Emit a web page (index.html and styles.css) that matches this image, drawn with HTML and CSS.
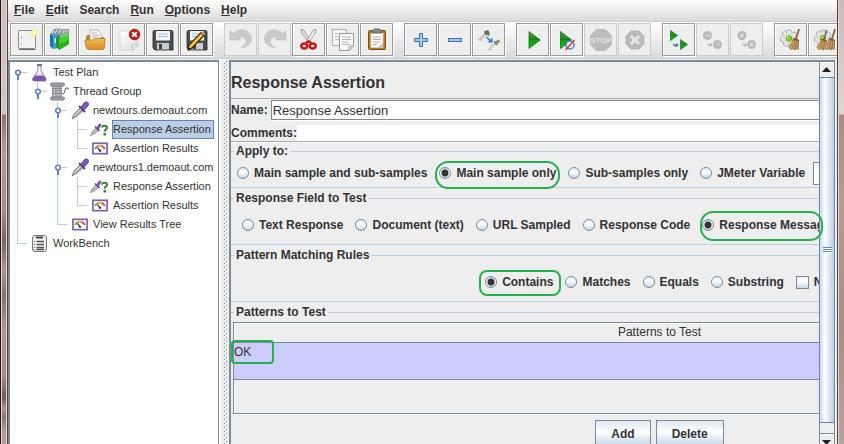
FILE: index.html
```html
<!DOCTYPE html>
<html lang="en">
<head>
<meta charset="utf-8">
<title>Response Assertion</title>
<link rel="stylesheet" href="styles.css">
</head>
<body>
<svg class="defs" aria-hidden="true">
  <defs>
    <linearGradient id="green" x1="0" y1="0" x2="0" y2="1"><stop offset="0" stop-color="#4fae4a"/><stop offset=".48" stop-color="#1c7a1c"/><stop offset=".52" stop-color="#04a804"/><stop offset="1" stop-color="#0cc40c"/></linearGradient>
    <linearGradient id="page" x1="0" y1="0" x2="1" y2="1"><stop offset="0" stop-color="#fff"/><stop offset="1" stop-color="#dcdcdc"/></linearGradient>
    <linearGradient id="folder" x1="0" y1="0" x2="0" y2="1"><stop offset="0" stop-color="#f0bf55"/><stop offset="1" stop-color="#d0922a"/></linearGradient>
    <linearGradient id="broom" x1="0" y1="0" x2="1" y2="0"><stop offset="0" stop-color="#c99a62"/><stop offset="1" stop-color="#8f6133"/></linearGradient>
    <symbol id="floppy" viewBox="0 0 31 31">
      <path d="M7 6.500H25L26 7.500V26H8L6 24V7.500Z" fill="#4a4d52" stroke="#222" stroke-width=".8"/>
      <rect x="9" y="7" width="14" height="9.500" fill="#eef3fa"/>
      <path d="M11 10H21M11 12.500H21" stroke="#a9c2e2"/>
      <rect x="10" y="19" width="12" height="6.500" fill="#c9cbce"/>
      <rect x="12" y="20" width="3" height="5" fill="#3b3d40"/>
    </symbol>
    <symbol id="dropper" viewBox="0 0 18 19">
      <path d="M1 18L3 13L10 6L13 9L6 15Z" fill="#a9a4ae" stroke="#77717e" stroke-width=".8"/>
      <path d="M3 15L10 8" stroke="#eee"/>
      <path d="M8 5L14 11" stroke="#5c3f91" stroke-width="2"/>
      <path d="M10 6L13 2Q15 0 17 1.500Q18.500 3.500 17 5L13 9Z" fill="#7b57b8" stroke="#593b8c" stroke-width=".7"/>
    </symbol>
    <symbol id="assert" viewBox="0 0 18 14">
      <path d="M.5 13.500L2 10L6.500 5.500L9 8L4.500 12Z" fill="#bcb8c0" stroke="#8a8491" stroke-width=".7"/>
      <path d="M5 4.500L9.500 9" stroke="#5c3f91" stroke-width="1.500"/>
      <path d="M6.500 5L9 2Q11 .5 11.500 3L9 7.500Z" fill="#7b57b8"/>
      <path d="M12 5.500Q12.500 3.800 14.500 3.800Q17 3.800 17 5.800Q17 7 15.800 7.700Q14.700 8.300 14.700 9.700" fill="none" stroke="#3b8132" stroke-width="2"/>
      <rect x="13.500" y="11" width="2.500" height="2.500" fill="#3b8132"/>
    </symbol>
    <symbol id="gauge" viewBox="0 0 17 13">
      <rect x="1" y="1" width="15" height="11" fill="#fff" stroke="#7d60ab" stroke-width="1.800"/>
      <path d="M3.500 7Q4 4.500 6.500 4" fill="none" stroke="#52a84d" stroke-width="2"/>
      <path d="M6 4Q8.500 2.800 11 4" fill="none" stroke="#efa04c" stroke-width="2"/>
      <path d="M10.500 4Q13 5 13.500 7" fill="none" stroke="#e0483e" stroke-width="2"/>
      <path d="M6 5.500L8.500 9" stroke="#222" stroke-width="1.200"/><circle cx="8.500" cy="9" r="1.200" fill="#222"/>
    </symbol>
    <symbol id="knob" viewBox="0 0 14 19">
      <path d="M7 9.500H13" stroke="#b8cfe5"/>
      <path d="M4 12V17" stroke="#6382bf" stroke-width="2"/>
      <circle cx="4" cy="9.500" r="2.300" fill="#fff" stroke="#6382bf" stroke-width="1.600"/>
    </symbol>
    <symbol id="twig" viewBox="0 0 14 19"><path d="M4 9.500H13" stroke="#b8cfe5"/></symbol>
    <symbol id="sweep" viewBox="0 0 12 22">
      <path d="M11 0L8 10" stroke="#8a6a45" stroke-width="1.800"/>
      <path d="M5 9L11 11L10.500 21L8.500 20L7 21.500L5 20L3 21L0 18Q4 14 5 9Z" fill="url(#broom)"/>
      <path d="M6 12L3 19M8 12L6 20M9.500 12L9 20" stroke="#e3bd87" stroke-width=".7"/>
      <path d="M5 9.500L11 11.500" stroke="#6f4a26"/>
    </symbol>
    <symbol id="gear" viewBox="0 0 18 18">
      <path d="M7 1H11L11.500 3.200L13 3.900L15 2.700L17 5.500L15.600 7.200V8L17.500 9V12L15.300 12.500L14.500 14L15 16L12.300 17.500L10.700 16H8L6.500 17.500L3.500 16L3.700 14L2.800 12.500L.5 12V8.500L2.500 7.500L2.900 6.200L2 4.200L4.300 2.200L6.200 3.300Z" fill="#e6e6e6" stroke="#a9a9a9" stroke-width=".9"/>
      <circle cx="9" cy="9.500" r="4.600" fill="#f5f5f5" stroke="#c4c4c4" stroke-width=".7"/>
      <circle cx="9" cy="9.500" r="2.900" fill="#7ecb1d" stroke="#5e9a1a" stroke-width=".7"/><circle cx="8.200" cy="8.500" r="1" fill="#d6f59d"/>
    </symbol>
  </defs>
</svg>
<div class="desktop">
  <div class="edge edge-left"></div>
  <main class="window">
    <nav class="menubar">
      <a href="#"><u>F</u>ile</a>
      <a href="#"><u>E</u>dit</a>
      <a href="#">Search</a>
      <a href="#"><u>R</u>un</a>
      <a href="#"><u>O</u>ptions</a>
      <a href="#"><u>H</u>elp</a>
    </nav>

    <div class="toolbar">
      <div class="group">
        <button aria-label="New"><svg viewBox="0 0 31 31"><rect x="7.500" y="6.500" width="17" height="18" rx="1" fill="#f1f1f1" stroke="#8c8c8c"/><path d="M8 25.500H24.500" stroke="#666"/><path d="M10.500 13v1.500M10.500 19v1.500" stroke="#999"/><circle cx="23" cy="9" r="3.500" fill="#f6ee7e"/><path d="M23 5L24 8L27 9L24 10L23 13L22 10L19 9L22 8Z" fill="#fffbd0"/></svg></button>
        <button aria-label="Templates"><svg viewBox="0 0 31 31"><path d="M5 10L9 5L13 4.500L18 5L24 5V12L9 14Z" fill="#8e9ca4"/><path d="M7 9L10 6M10 9L12.500 5.500M14 9L16 5.500M18 9L19.500 6M21 8L22.500 6" stroke="#e9eff2"/><path d="M5 10L8 11V25L5 22Z" fill="#1d6fae"/><path d="M8 11L14 10.500V24L8 25Z" fill="#3a9ad9"/><rect x="9.500" y="14" width="2" height="5" fill="#d9eefa"/><path d="M11 14L14 11L15 13V26L11 23Z" fill="#1f9a1f"/><path d="M14 14L24 11V20L14 26Z" fill="#45cf2c"/><path d="M14 20Q20 19 24 15V20L14 26Z" fill="#2bb11d"/><path d="M14 14L20 9L24 11Z" fill="#7fd76b"/></svg></button>
        <button aria-label="Open"><svg viewBox="0 0 31 31"><path d="M7 13Q7 11 9 11H12L14 13H25V24H8Z" fill="#b77f23"/><path d="M11 6H19L22 9V18H11Z" fill="#fafafa" stroke="#a9a9a9" stroke-width=".8"/><path d="M13 9H18M13 11H20M13 13H20" stroke="#aaa" stroke-width=".8"/><path d="M6 16H14L16 14.500H26Q26 24 24.500 25.500H9Q7 25 6 16Z" fill="url(#folder)" stroke="#b47b20" stroke-width=".8"/></svg></button>
        <button aria-label="Close"><svg viewBox="0 0 31 31"><path d="M7 7H25V21L20 26H7Z" fill="url(#page)" stroke="#cfcfcf" stroke-width=".8"/><path d="M25 20.500L19 21.500L20 26Z" fill="#fff" stroke="#a5a5a5" stroke-width=".7"/><circle cx="21.500" cy="10.500" r="5.300" fill="#c21616" stroke="#8d1010" stroke-width=".8"/><path d="M19.200 8.200L23.800 12.800M23.800 8.200L19.200 12.800" stroke="#fff" stroke-width="2"/></svg></button>
        <button aria-label="Save"><svg viewBox="0 0 31 31"><use href="#floppy"/></svg></button>
        <button aria-label="Save as"><svg viewBox="0 0 31 31"><use href="#floppy"/><path d="M7 26L8 21L20 8.500L23 11.500L11 24Z" fill="#f0b52a" stroke="#3c2c08" stroke-width="1.200"/><path d="M9.500 22.500L21 10.500" stroke="#ffe08a" stroke-width=".8"/><path d="M20 8.500L21.500 7L24.500 10L23 11.500Z" fill="#c98a7e"/><path d="M7 26L7.600 23.500L9.500 25Z" fill="#111"/></svg></button>
      </div>
      <div class="group">
        <button aria-label="Undo" disabled><svg viewBox="0 0 31 31"><path d="M5 7L8.500 9.500Q14 4 21 6.500Q27 9.500 26.500 16Q25 23 16.500 23.500Q22 20 20.500 15.500Q18 11.500 13.500 13.500L16 16H5Z" fill="#cacaca" stroke="#bcbcbc" stroke-width=".6"/></svg></button>
        <button aria-label="Redo" disabled><svg viewBox="0 0 31 31"><path d="M27 7L23.500 9.500Q18 4 11 6.500Q5 9.500 5.500 16Q7 23 15.500 23.500Q10 20 11.500 15.500Q14 11.500 18.500 13.500L16 16H27Z" fill="#cacaca" stroke="#bcbcbc" stroke-width=".6"/></svg></button>
        <button aria-label="Cut"><svg viewBox="0 0 31 31"><path d="M8.500 5Q7.500 8 9.500 10.500L16 18.500L17.500 17L10.500 6Z" fill="#dedede" stroke="#8d8d8d" stroke-width=".8"/><path d="M22.500 5Q23.500 8 21.500 10.500L15 18.500L13.500 17L20.500 6Z" fill="#f0f0f0" stroke="#8d8d8d" stroke-width=".8"/><path d="M13 17.500L15.500 16L18 17.500L19 19H12Z" fill="#cc1212"/><ellipse cx="11.300" cy="22" rx="3" ry="2.500" fill="none" stroke="#d31515" stroke-width="2.600"/><ellipse cx="19.700" cy="22" rx="3" ry="2.500" fill="none" stroke="#d31515" stroke-width="2.600"/></svg></button>
        <button aria-label="Copy"><svg viewBox="0 0 31 31"><rect x="5.500" y="5.500" width="14" height="16" fill="#f6f6f6" stroke="#b0b0b0"/><path d="M8 9.500H17M8 12.500H12M8 15.500H12" stroke="#c3c3c3"/><path d="M12.500 9.500H26.500V22L22 26.500H12.500Z" fill="#fafafa" stroke="#9a9a9a"/><path d="M15 13H24M15 15.500H24M15 18H21M15 20.500H22" stroke="#b4b4b4"/><path d="M26.500 21.500L22 22V26.500Z" fill="#ddd" stroke="#999" stroke-width=".7"/></svg></button>
        <button aria-label="Paste"><svg viewBox="0 0 31 31"><rect x="7.500" y="6.500" width="17" height="19" rx="1" fill="#c17d1c" stroke="#7c5010"/><path d="M10 9H22V23.500H10Z" fill="#fafafa" stroke="#d5d5d5" stroke-width=".7"/><path d="M22 18.500V23.500H16.500Z" fill="#bfc2c4"/><path d="M12 13H20M12 15.500H20M12 18H19M12 20.500H16" stroke="#b0b0b0"/><path d="M11 9V7L13.500 5H18.500L21 7V9Z" fill="#868a84" stroke="#555851" stroke-width=".8"/></svg></button>
      </div>
      <div class="group">
        <button aria-label="Expand all"><svg viewBox="0 0 31 31"><path d="M14.500 9.500H17.500V14.500H22.500V17.500H17.500V22.500H14.500V17.500H9.500V14.500H14.500Z" fill="#a7c6e8" stroke="#3a6ea8"/></svg></button>
        <button aria-label="Collapse all"><svg viewBox="0 0 31 31"><rect x="9.500" y="14.500" width="13" height="3" fill="#a7c6e8" stroke="#3a6ea8"/></svg></button>
        <button aria-label="Toggle"><svg viewBox="0 0 31 31"><path d="M6.500 16.500L13 9.500" stroke="#aaa" stroke-width="2.500"/><path d="M7.500 15.500L13 10" stroke="#f4f4f4"/><path d="M12 10L16 7.500" stroke="#4f8541" stroke-width="4"/><path d="M11.500 7L16.500 11.500" stroke="#66715f" stroke-width="1.500"/><path d="M16 26L22 19.500" stroke="#bbb" stroke-width="2.300"/><path d="M17 25L22 20" stroke="#f4f4f4"/><path d="M22 19.500L26.500 16.500" stroke="#6b9e56" stroke-width="3"/><path d="M21 17L24.500 21" stroke="#76826e" stroke-width="1.300"/><path d="M13.500 13L17 16.500" stroke="#2c7df0" stroke-width="1.600"/><path d="M19.500 13.500V18.500H14.500Z" fill="#2c7df0"/></svg></button>
      </div>
      <div class="group">
        <button aria-label="Start"><svg viewBox="0 0 31 31"><path d="M12 7.500V24.500L23 16Z" fill="url(#green)" stroke="#137013" stroke-width=".8"/></svg></button>
        <button aria-label="Start no pauses"><svg viewBox="0 0 31 31"><path d="M9.500 7.500V24.500L20.500 16Z" fill="url(#green)" stroke="#137013" stroke-width=".8"/><circle cx="19" cy="21" r="4" fill="#e8f0fa" stroke="#4a7fc0" stroke-width="1.500"/><path d="M14.500 26L23.500 16" stroke="#d03434" stroke-width="1.400"/></svg></button>
        <button aria-label="Stop" disabled><svg viewBox="0 0 31 31"><path d="M11.500 5H20.500L27 11.500V20.500L20.500 27H11.500L5 20.500V11.500Z" fill="#bcbcbc"/><text x="16" y="19" class="stop">STOP</text></svg></button>
        <button aria-label="Shutdown" disabled><svg viewBox="0 0 31 31"><path d="M12 7H20L25 12V20L20 25H12L7 20V12Z" fill="#bababa" stroke="#adadad" stroke-width=".8"/><path d="M12 12L20 20M20 12L12 20" stroke="#e6e6e6" stroke-width="3"/></svg></button>
      </div>
      <div class="group">
        <button aria-label="Remote start all"><svg viewBox="0 0 31 31"><path d="M7.500 6.500V16.500L14.500 11.500Z" fill="url(#green)" stroke="#137013" stroke-width=".7"/><path d="M17.500 15.500V25.500L24.500 20.500Z" fill="url(#green)" stroke="#137013" stroke-width=".7"/><path d="M10 19L11 20.500H13.500V18.500L15.500 21.500L12.500 23.500V22H11Q9.500 21 10 19Z" fill="#3671b8"/></svg></button>
        <button aria-label="Remote stop all" disabled><svg viewBox="0 0 31 31"><circle cx="10.500" cy="11.500" r="4.500" fill="#bbb"/><circle cx="20.500" cy="20.500" r="4.500" fill="#bbb"/><path d="M8 11.500H13M18 20.500H23" stroke="#d2d2d2" stroke-width="1.500"/><path d="M10.500 19L11.500 20H13.500V18.500L15.500 21L13 23V21.500H11Z" fill="#b5b5b5"/></svg></button>
        <button aria-label="Remote shutdown all" disabled><svg viewBox="0 0 31 31"><circle cx="11" cy="11.500" r="4.500" fill="#bbb"/><circle cx="20.500" cy="20.500" r="4.500" fill="#bbb"/><path d="M9.500 10L12.500 13M12.500 10L9.500 13M19 19L22 22M22 19L19 22" stroke="#e2e2e2" stroke-width="1.300"/><path d="M11 19L12 20H14V18.500L16 21L13.500 23V21.500H11.500Z" fill="#b5b5b5"/></svg></button>
      </div>
      <div class="group">
        <button aria-label="Clear"><svg viewBox="0 0 31 31"><use href="#gear" x="5" y="5" width="18" height="18"/><use href="#sweep" x="13" y="5" width="12" height="22"/></svg></button>
        <button aria-label="Clear all"><svg viewBox="0 0 31 31"><use href="#gear" x="5" y="5" width="18" height="18"/><use href="#sweep" x="7" y="6" width="12" height="21"/><use href="#sweep" x="15" y="5" width="12" height="22"/></svg></button>
      </div>
    </div>

    <div class="workspace">
      <aside class="tree-pane">
        <ul class="tree">
          <li>
            <div class="node"><svg class="twig"><use href="#knob"/></svg>
              <svg class="icon" viewBox="0 0 22 19"><path d="M10 2V8L4.500 15.500Q4 18 6 18H17Q18.500 18 18 15.500L13 8V2Z" fill="#ecebef" stroke="#8d8994"/><path d="M7 12.500H15.500L18 16Q18 18 16.500 18H6Q4.500 17.500 5 15.500Z" fill="#7a58b0"/><path d="M9 2H14" stroke="#77727e" stroke-width="2"/><path d="M11.500 5V11" stroke="#fff" stroke-width="1.500"/></svg>
              <span class="label">Test Plan</span></div>
            <ul>
              <li>
                <div class="node"><svg class="twig"><use href="#knob"/></svg>
                  <svg class="icon" viewBox="0 0 22 19"><path d="M4 4H14V15H4Z" fill="#aaa4ae"/><path d="M6.500 4V15M10 4V15" stroke="#d4d0d7"/><path d="M4 6.500H14M4 9H14M4 11.500H14" stroke="#837c88" stroke-width=".7"/><rect x="2.500" y="1" width="14" height="3" rx="1.500" fill="#aaa2ae" stroke="#6d6473" stroke-width=".8"/><rect x="2.500" y="15" width="14" height="3" rx="1.500" fill="#aaa2ae" stroke="#6d6473" stroke-width=".8"/><path d="M14 12Q17.500 12 17 8Q17 5 20 6V8" fill="none" stroke="#6d6473"/></svg>
                  <span class="label">Thread Group</span></div>
                <ul>
                  <li>
                    <div class="node"><svg class="twig"><use href="#knob"/></svg><svg class="icon" viewBox="0 0 22 19"><use href="#dropper" x="3" y="0" width="18" height="19"/></svg><span class="label">newtours.demoaut.com</span></div>
                    <ul>
                      <li><div class="node"><svg class="twig"><use href="#twig"/></svg><svg class="icon" viewBox="0 0 22 19"><use href="#assert" x="2" y="2" width="18" height="14"/></svg><span class="label selected">Response Assertion</span></div></li>
                      <li><div class="node"><svg class="twig"><use href="#twig"/></svg><svg class="icon" viewBox="0 0 22 19"><use href="#gauge" x="4" y="3" width="16" height="13"/></svg><span class="label">Assertion Results</span></div></li>
                    </ul>
                  </li>
                  <li>
                    <div class="node"><svg class="twig"><use href="#knob"/></svg><svg class="icon" viewBox="0 0 22 19"><use href="#dropper" x="3" y="0" width="18" height="19"/></svg><span class="label">newtours1.demoaut.com</span></div>
                    <ul>
                      <li><div class="node"><svg class="twig"><use href="#twig"/></svg><svg class="icon" viewBox="0 0 22 19"><use href="#assert" x="2" y="2" width="18" height="14"/></svg><span class="label">Response Assertion</span></div></li>
                      <li><div class="node"><svg class="twig"><use href="#twig"/></svg><svg class="icon" viewBox="0 0 22 19"><use href="#gauge" x="4" y="3" width="16" height="13"/></svg><span class="label">Assertion Results</span></div></li>
                    </ul>
                  </li>
                  <li><div class="node"><svg class="twig"><use href="#twig"/></svg><svg class="icon" viewBox="0 0 22 19"><use href="#gauge" x="4" y="3" width="16" height="13"/></svg><span class="label">View Results Tree</span></div></li>
                </ul>
              </li>
            </ul>
          </li>
          <li>
            <div class="node"><svg class="twig"><use href="#twig"/></svg>
              <svg class="icon" viewBox="0 0 22 19"><rect x="4.500" y="1.500" width="14" height="16" rx="2.500" fill="#f2f2f2" stroke="#77717c"/><path d="M8 3.500H15" stroke="#444" stroke-width="2"/><path d="M6.500 7v1M6.500 10v1M6.500 13v1M6.500 15.500v1" stroke="#3fb53f" stroke-width="1.500"/><path d="M8.500 7.500H16M8.500 10.500H16M8.500 13.500H16M8.500 15.500H16" stroke="#555" stroke-width="1.300"/></svg>
              <span class="label">WorkBench</span></div>
          </li>
        </ul>
      </aside>
      <div class="splitter"></div>

      <section class="detail">
        <div class="viewport">
          <form class="form">
            <h1>Response Assertion</h1>
            <div class="name-row"><label for="name">Name:</label><input id="name" type="text" value="Response Assertion"></div>
            <div class="comment-row"><label for="comments">Comments:</label><input id="comments" type="text"></div>

            <fieldset class="tight">
              <legend>Apply to:</legend>
              <div class="options apply">
                <label><input type="radio" name="scope">Main sample and sub-samples</label>
                <label class="marked wide"><input type="radio" name="scope" checked>Main sample only</label>
                <label><input type="radio" name="scope">Sub-samples only</label>
                <label><input type="radio" name="scope">JMeter Variable</label>
                <input class="variable" type="text" aria-label="Variable name">
              </div>
            </fieldset>

            <fieldset>
              <legend>Response Field to Test</legend>
              <div class="options field">
                <label><input type="radio" name="field">Text Response</label>
                <label><input type="radio" name="field">Document (text)</label>
                <label><input type="radio" name="field">URL Sampled</label>
                <label><input type="radio" name="field">Response Code</label>
                <label><input type="radio" name="field" checked>Response Message</label>
              </div>
            </fieldset>

            <fieldset>
              <legend>Pattern Matching Rules</legend>
              <div class="options rules">
                <label class="marked"><input type="radio" name="rule" checked>Contains</label>
                <label><input type="radio" name="rule">Matches</label>
                <label><input type="radio" name="rule">Equals</label>
                <label><input type="radio" name="rule">Substring</label>
                <label><input type="checkbox">Not</label>
              </div>
            </fieldset>

            <fieldset class="patterns">
              <legend>Patterns to Test</legend>
              <div class="table-box">
                <table>
                  <thead><tr><th>Patterns to Test</th></tr></thead>
                  <tbody><tr><td><span class="cell">OK</span></td></tr></tbody>
                </table>
              </div>
              <div class="actions"><button type="button">Add</button><button type="button">Delete</button></div>
            </fieldset>
          </form>
        </div>
        <div class="scrollbar">
          <button class="arrow" aria-label="Scroll up"><svg viewBox="0 0 13 14"><path d="M2 9L6.500 4L11 9Z" fill="#222"/></svg></button>
          <div class="thumb"></div>
          <div class="track"></div>
          <button class="arrow down" aria-label="Scroll down"><svg viewBox="0 0 13 14"><path d="M2 6L6.500 11L11 6Z" fill="#222"/></svg></button>
        </div>
        <span class="ring"></span>
      </section>
    </div>
  </main>
  <div class="edge edge-right"></div>
</div>
</body>
</html>
```
FILE: styles.css
```css
:root {
  --slate: #7a8a99;
  --line: #b8cfe5;
  --panel: #eeeeee;
  --accent: #6382bf;
  --mark: #22b14c;
}

* { box-sizing: border-box; }

body {
  margin: 0;
  overflow: hidden;
  background: var(--panel);
  color: #333;
  font: bold 12px/14px "Liberation Sans", Arial, sans-serif;
}

button, input { font: inherit; color: inherit; margin: 0; }

.defs { position: absolute; width: 0; height: 0; }

.desktop { display: flex; height: 100vh; }

.edge { flex: none; }

.edge-left {
  width: 8px;
  border-left: 1px solid #1c1414;
  border-right: 1px solid #4a4242;
  background: linear-gradient(#cdbdbb, #d2c3c1 114px, #8d6f6b 115px, #b79a95 150px, #a98a85 210px, #7c625f 240px, #b0928d 270px, #86706d 295px, #b29590 330px, #a98984 375px, #6f5a58 398px, #b38e8a 408px, #897370 418px, #b59994 430px);
  box-shadow: inset 1px 0 #e5dcda, inset -1px 0 #e5dcda;
}

.edge-right {
  width: 7px;
  border-left: 1px solid #4a4242;
  background: linear-gradient(#cbb9b6, #ded5d3 114px, #a88c87 115px, #b39a95 200px, #a88e89 330px, #b9a19d);
  box-shadow: inset 1px 0 #e5dcda;
}

.window { flex: 1; min-width: 0; display: flex; flex-direction: column; }

.menubar {
  display: flex;
  gap: 11px;
  height: 22px;
  padding: 3px 6px;
  border-bottom: 1px solid #ccc;
  background: linear-gradient(#fff, #dadada);
}

.menubar a { color: inherit; text-decoration: none; }

.toolbar {
  display: flex;
  gap: 11px;
  flex: none;
  overflow: hidden;
  padding: 1px 2px 2px;
  margin-bottom: 1px;
  border-bottom: 1px solid #ccc;
  background: linear-gradient(#fff, #dadada);
}

.group { display: flex; gap: 1px; }

.group button {
  flex: none;
  width: 33px;
  height: 33px;
  padding: 0;
  border: 1px solid #999;
  background: var(--panel);
  box-shadow: inset 1px 1px #fff, 1px 1px #fff;
}

.group button:disabled { border-color: #ccc; box-shadow: none; }
.group svg { display: block; width: 31px; height: 31px; }

.stop { font-size: 8px; fill: #e2e2e2; text-anchor: middle; }

.workspace { flex: 1; min-height: 0; display: flex; }

.tree-pane {
  flex: 0 0 211px;
  overflow: hidden;
  border: solid var(--slate);
  border-width: 2px 1px 0 2px;
  background: #fff;
  font-weight: normal;
  font-size: 11px;
}

.tree, .tree ul { list-style: none; margin: 0; padding: 0; }
.tree { padding: 1px 0 0 4px; }
.tree ul { margin-left: 20px; }

.tree li { background: linear-gradient(var(--line), var(--line)) 3px 0 / 1px 100% no-repeat; }
.tree li:last-child { background-size: 1px 10px; }
.tree > li:first-child { background-position: 3px 10px; }

.node { display: flex; align-items: center; height: 19px; }
.twig { width: 14px; height: 19px; flex: none; }
.icon { width: 22px; height: 19px; flex: none; margin-right: 2px; }

.label {
  height: 19px;
  padding-right: 2px;
  border: 1px solid transparent;
  line-height: 17px;
  white-space: nowrap;
}

.selected { border-color: var(--accent); background: var(--line); }

.splitter {
  flex: 0 0 10px;
  border-left: 2px solid #fff;
  padding: 0 2px;
  background:
    conic-gradient(from 270deg at 1px 1px, var(--slate) 90deg, transparent 0) 3px 1px / 4px 4px content-box,
    conic-gradient(from 270deg at 1px 1px, var(--slate) 90deg, transparent 0) 1px 3px / 4px 4px content-box,
    var(--panel);
}

.detail {
  position: relative;
  flex: 1;
  min-width: 0;
  display: flex;
  margin-right: 2px;
  border: solid var(--slate);
  border-width: 2px 1px 0 2px;
}

.viewport { flex: 1; min-width: 0; overflow: hidden; }

.form { display: flex; flex-direction: column; gap: 3px; min-width: 857px; }

h1 {
  margin: 0 0 -2px;
  padding-top: 6px;
  border-bottom: 1px solid #aaa;
  font-size: 16px;
  line-height: 30px;
}

.name-row, .comment-row { display: flex; align-items: center; }
.name-row { gap: 3px; }
.name-row input {
  flex: 1;
  height: 20px;
  padding: 0 1px;
  border: 1px solid var(--slate);
  background: #fff;
  box-shadow: 0 1px #fff;
  font-size: 13px;
  font-weight: normal;
}

.comment-row { margin: 2px 0 -1px; border-bottom: 1px solid #aaa; box-shadow: 0 1px #fff; }
.comment-row input { flex: 1; height: 16px; padding: 0; border: 0; background: #fff; }

fieldset {
  min-width: 0;
  margin: 0;
  padding: 12px 0 11px;
  border: solid var(--line);
  border-width: 1px 0;
}

fieldset.tight { padding: 7px 0 6px; }
fieldset.patterns { padding: 3px 0 0; border-bottom: 0; }
legend { margin-left: 3px; padding: 0 2px; }

.options { display: flex; align-items: center; gap: 12px; height: 16px; }
.apply { padding-left: 6px; }
.field { padding-left: 11px; }
.rules { justify-content: center; }

.options label {
  position: relative;
  display: flex;
  align-items: center;
  gap: 5px;
  white-space: nowrap;
}

input[type="radio"], input[type="checkbox"] {
  appearance: none;
  width: 12px;
  height: 12px;
  border: 1px solid var(--slate);
  background: linear-gradient(#e6eef7, #fff 40%, #c3d5e8);
}

input[type="radio"] { border-radius: 50%; }
input[type="checkbox"] { width: 13px; height: 13px; }
input[type="radio"]:checked {
  background: radial-gradient(circle, #333 3px, transparent 4px), linear-gradient(#c3d5e8, #fff 50%, #c3d5e8);
}

.variable {
  width: 80px;
  height: 23px;
  margin-left: -4px;
  border: 1px solid var(--slate);
  background: #fff;
}

.marked::after, .cell::after, .ring {
  content: "";
  position: absolute;
  border: 2px solid var(--mark);
  border-radius: 8px;
  pointer-events: none;
}

.marked::after { inset: -5px -8px -7px -6px; }
.wide::after { inset: -5px -4px -9px; border-radius: 13px; }

.ring {
  right: 11px;
  top: 149px;
  width: 123px;
  height: 30px;
  border-radius: 13px;
}

.table-box {
  height: 92px;
  margin: 0 2px;
  border: 1px solid var(--slate);
  box-shadow: inset 1px 1px #fff, 0 1px #fff;
}

table { width: 100%; border-collapse: collapse; font-weight: normal; }
th { height: 19px; padding: 0; border-bottom: 1px solid var(--slate); font-weight: normal; }
td { height: 37px; padding: 2px 0; border-bottom: 1px solid var(--slate); background: #ccccff; vertical-align: top; }

.cell { position: relative; display: inline-block; }
.cell::after { inset: -5px -23px -5px -3px; border-radius: 4px; }

.actions { display: flex; justify-content: center; gap: 5px; margin-top: 6px; }
.actions button {
  height: 28px;
  padding: 0 15px;
  border: 1px solid var(--slate);
  background: linear-gradient(#dfe9f4, #fff 45%, #b8cfe5);
}

.scrollbar { flex: 0 0 15px; display: flex; flex-direction: column; border-left: 1px solid var(--slate); }
.arrow { height: 15px; flex: none; padding: 0; border: 0; background: var(--panel); box-shadow: inset 1px 1px #fff; }
.arrow svg { display: block; width: 13px; height: 14px; }
.down { height: 11px; border-top: 1px solid var(--slate); overflow: hidden; }

.thumb {
  flex: 1;
  margin-left: -1px;
  border: solid var(--accent);
  border-width: 1px 0 1px 1px;
  background:
    repeating-linear-gradient(var(--accent) 0 1px, #fff 1px 2px) center / 9px 6px no-repeat,
    linear-gradient(90deg, #c8d9ec, #fff 35%, #b8cfe5);
}

.track { height: 10px; background: var(--panel); }
```
